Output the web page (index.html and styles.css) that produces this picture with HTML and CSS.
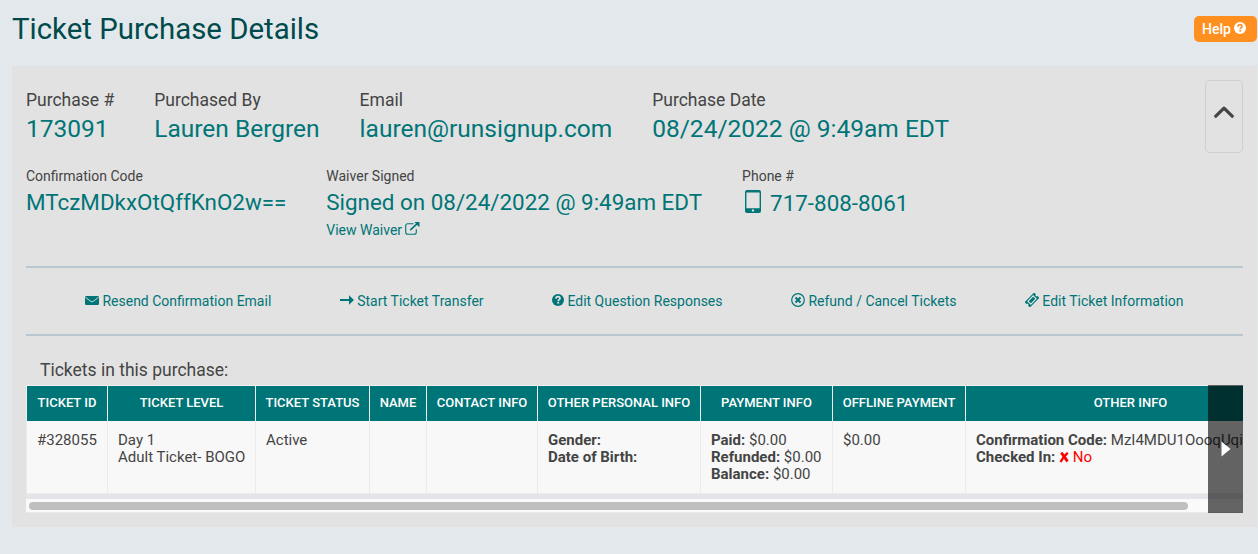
FILE: index.html
```html
<!DOCTYPE html>
<html lang="en">
<head>
<meta charset="utf-8">
<title>Ticket Purchase Details</title>
<link rel="stylesheet" href="styles.css">
</head>
<body>
<header class="page-head">
  <h1 class="title">Ticket Purchase Details</h1>
  <a class="help"><span>Help</span>
    <svg class="ic-help" width="12" height="12" viewBox="0 0 12 12"><circle cx="6" cy="6" r="6" fill="#fff"/><path d="M3.900 4.600C4 3.200 5 2.700 6 2.700c1.200 0 2 .7 2 1.700C8 5.700 6.200 5.600 6.200 7.200" fill="none" stroke="#ff8f1f" stroke-width="1.700"/><rect x="5.300" y="8" width="1.800" height="1.600" fill="#ff8f1f"/></svg>
  </a>
</header>
<main class="panel">
  <section class="summary">
    <dl class="facts facts-lg">
      <div><dt>Purchase #</dt><dd>173091</dd></div>
      <div><dt>Purchased By</dt><dd>Lauren Bergren</dd></div>
      <div><dt>Email</dt><dd>lauren@runsignup.com</dd></div>
      <div><dt>Purchase Date</dt><dd>08/24/2022 @ 9:49am EDT</dd></div>
    </dl>
    <button class="collapse" aria-label="Collapse">
      <svg width="20" height="12" viewBox="0 0 20 12"><path d="M1.800 10.200 10 2.200l8.200 8" fill="none" stroke="#444" stroke-width="3.200" stroke-linecap="round" stroke-linejoin="round"/></svg>
    </button>
  </section>
  <dl class="facts facts-sm">
    <div><dt>Confirmation Code</dt><dd>MTczMDkxOtQffKnO2w==</dd></div>
    <div><dt>Waiver Signed</dt><dd>Signed on 08/24/2022 @ 9:49am EDT</dd>
      <dd class="waiver"><a>View Waiver</a><svg width="15" height="13" viewBox="0 0 15 13"><path d="M8.500 1.700H2.800Q.7 1.700.7 3.700v6.500q0 2 2.100 2h6.400q2.100 0 2.100-2V7.300" fill="none" stroke="#007577" stroke-width="1.100"/><path d="M5.200 8.200 12 1.900" stroke="#007577" stroke-width="1.600"/><path d="M9.300 0H14.500V5.200z" fill="#007577"/></svg></dd></div>
    <div><dt>Phone #</dt><dd class="phone"><svg width="16" height="23" viewBox="0 0 16 23"><path fill="#007577" fill-rule="evenodd" d="M2 0h12q2 0 2 2v19q0 2-2 2H2q-2 0-2-2V2Q0 0 2 0zM1.400 2.500v15.700h13.200V2.500zM8 19.300a1.200 1.200 0 1 0 .01 0z"/></svg><span>717-808-8061</span></dd></div>
  </dl>
  <nav class="actions">
    <a><svg width="14" height="9" viewBox="0 0 14 9"><rect width="14" height="9" rx="1.200" fill="#007577"/><path d="M.4 1.300 5.800 5.400q1.200.9 2.400 0L13.600 1.300" fill="none" stroke="#e2e2e2" stroke-width=".9"/></svg><span>Resend Confirmation Email</span></a>
    <a><svg width="14" height="10" viewBox="0 0 14 10"><path d="M0 4H9V.3L14 5 9 9.700V6H0z" fill="#007577"/></svg><span>Start Ticket Transfer</span></a>
    <a><svg width="12" height="12" viewBox="0 0 12 12"><circle cx="6" cy="6" r="6" fill="#007577"/><path d="M3.900 4.600C4 3.200 5 2.700 6 2.700c1.200 0 2 .7 2 1.700C8 5.700 6.200 5.600 6.200 7.200" fill="none" stroke="#e2e2e2" stroke-width="1.700"/><rect x="5.300" y="8" width="1.800" height="1.600" fill="#e2e2e2"/></svg><span>Edit Question Responses</span></a>
    <a><svg width="14" height="14" viewBox="0 0 14 14"><circle cx="7" cy="7" r="6.300" fill="none" stroke="#007577" stroke-width="1.200"/><path d="M4.500 4.500l5 5M9.500 4.500l-5 5" stroke="#007577" stroke-width="2"/></svg><span>Refund / Cancel Tickets</span></a>
    <a><svg width="14" height="14" viewBox="0 0 14 14"><g transform="rotate(-45 7 7)"><path d="M.2 3.200H13.800V5.700a1.300 1.300 0 0 0 0 2.600V10.800H.2V8.300a1.300 1.300 0 0 0 0-2.600z" fill="#007577"/><rect x="3.300" y="4.900" width="7.400" height="4.200" fill="none" stroke="#e2e2e2" stroke-width="1.100"/></g></svg><span>Edit Ticket Information</span></a>
  </nav>
  <h2 class="sub">Tickets in this purchase:</h2>
  <div class="scroller">
    <div class="grid">
      <div class="th">TICKET ID</div><div class="th">TICKET LEVEL</div><div class="th">TICKET STATUS</div><div class="th">NAME</div><div class="th">CONTACT INFO</div><div class="th">OTHER PERSONAL INFO</div><div class="th">PAYMENT INFO</div><div class="th">OFFLINE PAYMENT</div><div class="th">OTHER INFO</div>
      <div class="td">#328055</div>
      <div class="td">Day 1<br>Adult Ticket- BOGO</div>
      <div class="td">Active</div>
      <div class="td"></div>
      <div class="td"></div>
      <div class="td"><b>Gender:</b><br><b>Date of Birth:</b></div>
      <div class="td"><b>Paid:</b> $0.00<br><b>Refunded:</b> $0.00<br><b>Balance:</b> $0.00</div>
      <div class="td">$0.00</div>
      <div class="td"><b>Confirmation Code:</b> MzI4MDU1OooqUqi<br><b>Checked In:</b> <span class="no"><svg width="10" height="11" viewBox="0 0 11 12"><path d="M2.400.8Q4.800 3.200 9.300 10.400" fill="none" stroke="red" stroke-width="3.200"/><path d="M9.700.8Q5 4.500 1.700 11" fill="none" stroke="red" stroke-width="2.600"/></svg> No</span></div>
    </div>
    <div class="track"><div class="thumb"></div></div>
    <div class="next"><svg width="10" height="16" viewBox="0 0 10 16"><path d="M.5.500 9.500 8 .5 15.500z" fill="#fff"/></svg></div>
  </div>
</main>
</body>
</html>
```
FILE: styles.css
```css
* { box-sizing: border-box; }
body { margin: 0; height: 554px; overflow: hidden; background: #e2e8eb; font-family: Roboto, sans-serif; color: #444; }
h1, h2, dl, dt, dd { margin: 0; font-weight: 400; }
svg { flex: none; display: block; }
.page-head { display: flex; justify-content: space-between; align-items: flex-start; height: 66px; padding: 11px 1px 0 12px; }
.title { font-size: 29.4px; line-height: 36px; color: #004a4b; white-space: nowrap; }
.help { display: flex; align-items: center; width: 63px; height: 26px; margin-top: 5px; padding-left: 8px; gap: 3px; border-radius: 5px; background: #ff8f1f; color: #fff; font-size: 14px; font-weight: 500; }
.ic-help { margin-top: -2px; }
.panel { width: 1245px; height: 461px; margin-left: 12px; padding: 14px; background: #e2e2e2; }
.summary { display: flex; justify-content: space-between; height: 88px; }
.facts { display: flex; gap: 40px; white-space: nowrap; }
.facts dd { color: #007577; }
.facts-lg { padding-top: 8px; }
.facts-lg dt { font-size: 17.5px; line-height: 24px; }
.facts-lg dd { font-size: 24.5px; line-height: 33px; }
.collapse { display: flex; justify-content: center; align-items: center; width: 38px; height: 73px; padding: 0 0 10px; border: 1px solid #cfcfcf; border-radius: 5px; background: none; }
.facts-sm { height: 98px; }
.facts-sm dt { font-size: 14px; line-height: 16px; }
.facts-sm dd { font-size: 22.4px; line-height: 36px; }
.facts-sm .waiver { display: flex; gap: 3px; font-size: 14px; line-height: 20px; }
.waiver svg { margin-top: 2px; }
.facts-sm .phone { display: flex; gap: 9px; padding: 1px 0 0 3px; }
.phone svg { margin-top: 5px; }
.actions { display: flex; justify-content: space-around; height: 70px; padding: 0 25px; border-top: 2px solid #b9c6ce; border-bottom: 2px solid #b9c6ce; color: #007577; font-size: 14px; }
.actions a { display: flex; align-items: center; gap: 3px; }
.actions svg { margin-top: -2px; }
.sub { height: 49px; padding: 22px 0 0 14px; font-size: 17.5px; line-height: 24px; }
.scroller { position: relative; width: 1217px; height: 128px; overflow: hidden; background: #e3e5e8; }
.grid { display: grid; grid-template-columns: 82px 148px 114px 57px 111px 163px 132px 133px 330px; grid-template-rows: 36px 73px; width: 1270px; }
.th { padding-top: 1px; border: solid #f0f2f2; border-width: 1px 1px 0 0; background: #007577; color: #fff; font-size: 13px; font-weight: 500; line-height: 32px; text-align: center; white-space: nowrap; }
.td { padding: 11px 0 0 10px; border: solid #ebebeb; border-width: 0 1px 1px 0; background: #f8f8f8; font-size: 15px; line-height: 17px; white-space: nowrap; }
.th:first-child, .td:nth-child(10) { border-left-width: 1px; }
.no { color: red; }
.no svg { display: inline-block; vertical-align: -1px; }
.track { height: 14px; margin-top: 5px; padding: 3px; background: #fafafa; border-bottom: 1px solid #e9e9e9; }
.thumb { width: 1159px; height: 8px; border-radius: 4px; background: #bfbfbf; }
.next { position: absolute; top: 0; right: 0; width: 35px; height: 128px; display: flex; align-items: center; justify-content: center; background: rgba(0, 0, 0, .6); }
```
